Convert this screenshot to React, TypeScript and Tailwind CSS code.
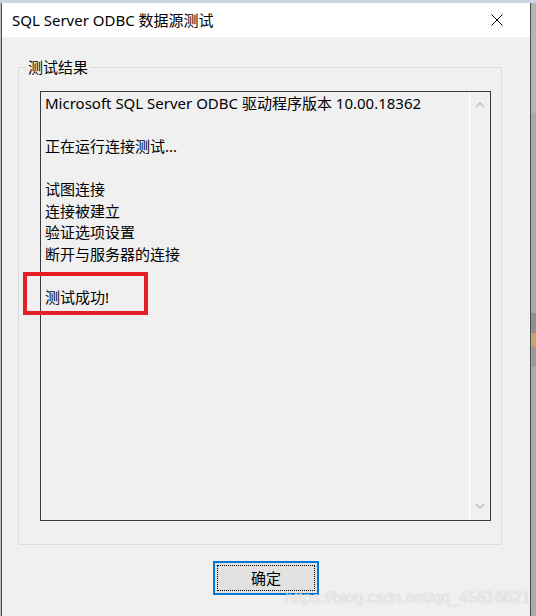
const lines = [
  "Microsoft SQL Server ODBC 驱动程序版本 10.00.18362",
  "",
  "正在运行连接测试...",
  "",
  "试图连接",
  "连接被建立",
  "验证选项设置",
  "断开与服务器的连接",
  "",
  "测试成功!",
];

const font = "font-['Noto_Sans','Noto_Sans_CJK_SC',sans-serif]";

const Chevron = ({ up }: { up?: boolean }) => (
  <svg width="10" height="6" viewBox="0 0 10 6" className="block">
    <path
      d={up ? "M1 5 L5 1 L9 5" : "M1 1 L5 5 L9 1"}
      fill="none"
      stroke="#c2c2c2"
      strokeWidth="1.6"
    />
  </svg>
);

const App = () => {
  return (
    <div className={`relative w-[536px] h-[616px] overflow-hidden bg-[#a9a9a9] ${font} text-[15px] text-black`}>
      <div className="h-[3px] bg-[#cbd5e5]" />
      <div className="flex h-[613px]">
        <div className="w-px bg-[#bdbdbd]" />
        <div className="w-[530px] flex flex-col border-l border-r border-[#4d4d4d]">
          {/* title bar */}
          <div className="h-[34px] bg-white flex items-center justify-between pl-[10px] pr-[27px]">
            <span className="leading-none">SQL Server ODBC 数据源测试</span>
            <svg width="12" height="12" viewBox="0 0 12 12" className="block">
              <path d="M0.5 0.5 L11.5 11.5 M11.5 0.5 L0.5 11.5" stroke="#000" strokeWidth="1" />
            </svg>
          </div>

          {/* body */}
          <div className="flex-1 bg-[#f0f0f0] flex flex-col">
            <div className="relative mt-[30px] ml-[16px] w-[484px] h-[478px] border border-[#dcdcdc] pl-[21px] pt-[23px]">
              <span className="absolute left-[7px] -top-[11px] bg-[#f0f0f0] px-[2px] leading-[20px]">
                测试结果
              </span>
              <div className="flex w-[451px] h-[430px] border border-[#3a3a3a]">
                <div className="flex-1 pl-[4px] pt-[1px] leading-[21.5px] whitespace-pre">
                  {lines.map((l, i) => (
                    <div key={i} className="h-[21.5px]">
                      {l}
                    </div>
                  ))}
                </div>
                <div className="w-[21px] border-l border-white flex flex-col items-center justify-between pt-[10px] pb-[11px]">
                  <Chevron up />
                  <Chevron />
                </div>
              </div>
            </div>

            <button className="self-center mt-[16px] w-[106px] h-[34px] border-2 border-[#0078d7] bg-[#e1e1e1] p-[2px]">
              <div className="w-full h-full border border-dotted border-black flex items-center justify-center">
                确定
              </div>
            </button>
          </div>
        </div>
        <div className="flex-1 flex flex-col">
          <div className="h-[110px] bg-[#b4b4b4]" />
          <div className="h-[200px] bg-[#a8a8a8]" />
          <div className="h-[20px] bg-[#8f8f8f]" />
          <div className="h-[14px] bg-[#c7a46a]" />
          <div className="h-[20px] bg-[#9a9a9a]" />
          <div className="flex-1 bg-[#ababab]" />
        </div>
      </div>

      {/* annotation */}
      <div className="absolute left-[23px] top-[272px] w-[125px] h-[43px] border-4 border-[#e61f26]" />

      {/* watermark */}
      <div className="absolute left-[285px] top-[586px] font-['Liberation_Sans',sans-serif] text-[16px] text-white/70 [text-shadow:0_0_1px_rgba(0,0,0,0.25)]">
        https://blog.csdn.net/qq_45616621
      </div>
    </div>
  );
};

export default App;
